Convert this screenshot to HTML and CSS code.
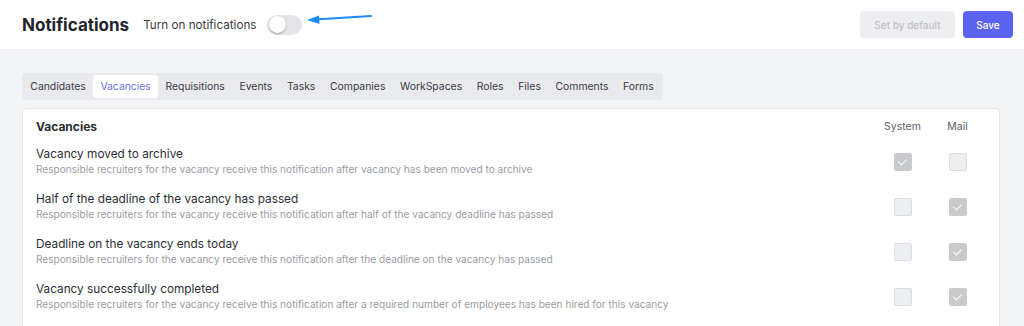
FILE: index.html
```html
<!DOCTYPE html>
<html lang="en">
  <head>
    <meta charset="UTF-8" />
    <meta name="viewport" content="width=device-width, initial-scale=1.0" />
    <title>Notifications</title>
    <link rel="stylesheet" href="styles.css">
  </head>
  <body>
    <header class="topbar">
      <h1>Notifications</h1>
      <label class="switch-label">
        Turn on notifications
        <span class="switch"><span class="knob"></span></span>
      </label>
      <svg class="arrow" width="70" height="12" viewBox="0 0 70 12">
        <path d="M66 3 L10 6.5" stroke="#1a8cf5" stroke-width="2" stroke-linecap="round" fill="none" />
        <path d="M2 7 L14 2.5 L14.5 11 Z" fill="#1a8cf5" />
      </svg>
      <div class="actions">
        <button class="btn btn-muted" disabled>Set by default</button>
        <button class="btn btn-primary">Save</button>
      </div>
    </header>
    <main class="content">
      <nav class="tabs">
        <span class="tab">Candidates</span>
        <span class="tab active">Vacancies</span>
        <span class="tab">Requisitions</span>
        <span class="tab">Events</span>
        <span class="tab">Tasks</span>
        <span class="tab">Companies</span>
        <span class="tab">WorkSpaces</span>
        <span class="tab">Roles</span>
        <span class="tab">Files</span>
        <span class="tab">Comments</span>
        <span class="tab">Forms</span>
      </nav>
      <section class="card">
        <div class="row head">
          <h2>Vacancies</h2>
          <span class="col">System</span>
          <span class="col">Mail</span>
        </div>
        <div class="row">
          <div>
            <div class="title">Vacancy moved to archive</div>
            <div class="desc">Responsible recruiters for the vacancy receive this notification after vacancy has been moved to archive</div>
          </div>
          <span class="col"><span class="check on"></span></span>
          <span class="col"><span class="check"></span></span>
        </div>
        <div class="row">
          <div>
            <div class="title">Half of the deadline of the vacancy has passed</div>
            <div class="desc">Responsible recruiters for the vacancy receive this notification after half of the vacancy deadline has passed</div>
          </div>
          <span class="col"><span class="check"></span></span>
          <span class="col"><span class="check on"></span></span>
        </div>
        <div class="row">
          <div>
            <div class="title">Deadline on the vacancy ends today</div>
            <div class="desc">Responsible recruiters for the vacancy receive this notification after the deadline on the vacancy has passed</div>
          </div>
          <span class="col"><span class="check"></span></span>
          <span class="col"><span class="check on"></span></span>
        </div>
        <div class="row">
          <div>
            <div class="title">Vacancy successfully completed</div>
            <div class="desc">Responsible recruiters for the vacancy receive this notification after a required number of employees has been hired for this vacancy</div>
          </div>
          <span class="col"><span class="check"></span></span>
          <span class="col"><span class="check on"></span></span>
        </div>
      </section>
    </main>
  </body>
</html>
```

FILE: styles.css
```css
body {
  margin: 0;
  background: #f3f4f6;
  font-family: Inter, "Noto Sans", sans-serif;
  color: #2c2d33;
}

.topbar {
  position: relative;
  height: 49px;
  padding: 0 11px 0 22px;
  background: #fff;
  border-bottom: 1px solid #ebecef;
  display: flex;
  align-items: center;
}

.topbar h1 {
  margin: 0 14px 0 0;
  font-size: 17px;
  font-weight: 700;
  color: #22232b;
}

.switch-label {
  display: flex;
  align-items: center;
  gap: 10px;
  font-size: 11.7px;
  color: #3a3b42;
}

.switch {
  width: 35px;
  height: 20px;
  border-radius: 10px;
  background: #e4e5e9;
  display: flex;
  align-items: center;
  padding: 0 2px;
  box-sizing: border-box;
}

.knob {
  width: 17px;
  height: 17px;
  border-radius: 50%;
  background: #fff;
  box-shadow: 0 1px 2px rgba(0, 0, 0, 0.3);
}

.arrow {
  position: absolute;
  left: 305px;
  top: 13px;
}

.actions {
  margin-left: auto;
  display: flex;
  gap: 8px;
}

.btn {
  height: 27px;
  border: 0;
  border-radius: 4px;
  font-family: inherit;
  font-size: 10px;
  font-weight: 500;
  padding: 0;
  white-space: nowrap;
}

.btn-muted {
  width: 95px;
  background: #edeef1;
  color: #bfc1c7;
}

.btn-primary {
  width: 50px;
  background: #5b64f1;
  color: #fff;
}

.content {
  padding: 23px 24px 0 22px;
}

.tabs {
  display: inline-flex;
  padding: 2px 2px 2px 1px;
  background: #e9eaee;
  border-radius: 4px;
  margin-bottom: 8px;
}

.tab {
  padding: 0 7.3px;
  height: 23px;
  line-height: 23px;
  font-size: 10.4px;
  color: #3a3b42;
  border-radius: 3px;
}

.tab.active {
  background: #fff;
  color: #6a70f0;
}

.card {
  background: #fff;
  border: 1px solid #e6e7ea;
  border-radius: 5px;
  padding: 4px 14px 20px 13px;
}

.row {
  display: grid;
  grid-template-columns: 1fr 55px 55px;
  align-items: center;
  height: 45px;
}

.row.head {
  height: 26px;
}

.card h2 {
  margin: 0;
  font-size: 12px;
  font-weight: 700;
  color: #2c2d33;
}

.col {
  display: flex;
  justify-content: center;
  font-size: 10.5px;
  color: #5c5e66;
}

.title {
  font-size: 11.8px;
  color: #2c2d33;
  line-height: 16px;
}

.desc {
  font-size: 10.1px;
  color: #9b9ca3;
  line-height: 15px;
}

.check {
  width: 16px;
  height: 16px;
  border-radius: 2px;
  border: 1px solid #dcdde1;
  background: #edeef1;
  position: relative;
}

.check.on {
  background: #c9cace;
  border-color: #c9cace;
}

.check.on::after {
  content: "";
  position: absolute;
  left: 5px;
  top: 3px;
  width: 4px;
  height: 7px;
  border: solid #fff;
  border-width: 0 1.5px 1.5px 0;
  transform: rotate(45deg);
}
```
